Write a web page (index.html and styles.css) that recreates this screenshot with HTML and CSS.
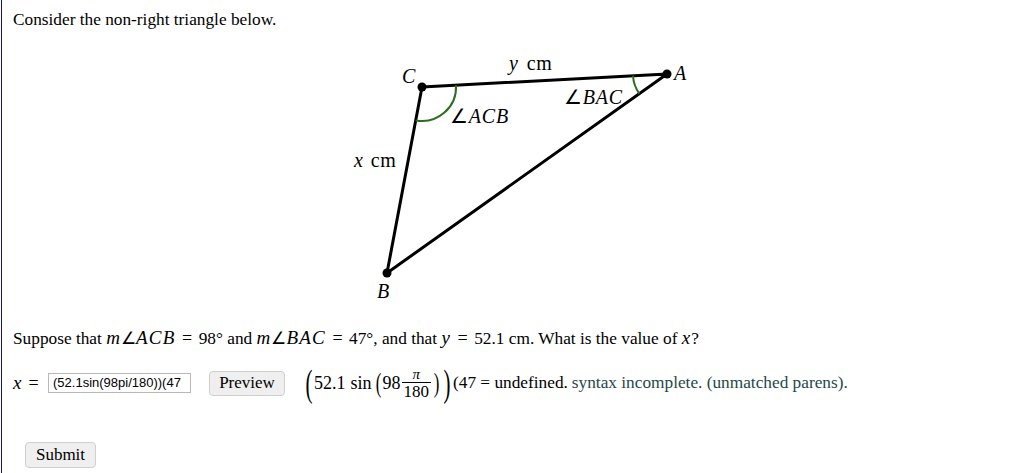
FILE: index.html
```html
<!DOCTYPE html>
<html>
<head>
<meta charset="utf-8">
<link rel="stylesheet" href="styles.css">
</head>
<body>
<div class="page">
  <p class="intro">Consider the non-right triangle below.</p>
  <svg class="figure" width="700" height="270" viewBox="12 40 700 270" xmlns="http://www.w3.org/2000/svg">
    <path d="M421 87 L666 74 L386 273 Z" fill="none" stroke="#000" stroke-width="3" stroke-linejoin="round"/>
    <path d="M455 85.2 A34 34 0 0 1 414.7 120.4" fill="none" stroke="#2b6e1e" stroke-width="2"/>
    <path d="M632 75.8 A34 34 0 0 0 638.3 93.7" fill="none" stroke="#2b6e1e" stroke-width="2"/>
    <circle cx="421" cy="87" r="4.5" fill="#000"/>
    <circle cx="666" cy="74" r="4.5" fill="#000"/>
    <circle cx="386" cy="273" r="4.5" fill="#000"/>
    <text class="lbl it" x="401" y="83">C</text>
    <text class="lbl it" x="673" y="80">A</text>
    <text class="lbl it" x="376" y="298">B</text>
    <text class="lbl" x="508" y="70"><tspan class="it">y</tspan><tspan dx="8">cm</tspan></text>
    <text class="lbl" x="353" y="167"><tspan class="it">x</tspan><tspan dx="7">cm</tspan></text>
    <text class="lbl" x="563" y="104">∠<tspan class="it">BAC</tspan></text>
    <text class="lbl" x="449" y="123">∠<tspan class="it">ACB</tspan></text>
  </svg>
  <p class="question">Suppose that <span class="m">m</span>∠<span class="m">ACB</span><span class="rel">=</span>98° and <span class="m">m</span>∠<span class="m">BAC</span><span class="rel">=</span>47°, and that <span class="m">y</span><span class="rel">=</span>52.1 cm. What is the value of <span class="m">x</span>?</p>
  <div class="answer">
    <span class="var"><span class="m">x</span><span class="rel">=</span></span>
    <span class="inputbox">(52.1sin(98pi/180))(47</span>
    <span class="btn preview">Preview</span>
    <span class="render">
      <span class="bigp">(</span><span class="num">52.1</span><span class="fn">sin</span><span class="midp">(</span><span class="num">98</span><span class="frac"><span class="fnum">π</span><span class="fden">180</span></span><span class="midp">)</span><span class="bigp">)</span><span class="tail">(47 = undefined.</span> <span class="err">syntax incomplete. (unmatched parens).</span>
    </span>
  </div>
  <div class="submitrow"><span class="btn submit">Submit</span></div>
</div>
</body>
</html>
```
FILE: styles.css
```css
html, body {
  margin: 0;
  padding: 0;
  background: #fff;
}
body {
  font-family: "Liberation Serif", "Times New Roman", serif;
  font-size: 17.3px;
  color: #000;
}
.page {
  margin-left: 1px;
  border-left: 1px solid #15156b;
  padding: 10px 0 0 11px;
  height: 463px;
}
.intro {
  margin: 0;
  line-height: 20px;
}
.figure {
  display: block;
  margin-top: 10px;
}
.lbl {
  font-family: "Liberation Serif", serif;
  font-size: 20px;
  letter-spacing: 0.8px;
  fill: #000;
}
.it {
  font-style: italic;
}
.question {
  margin: 18px 0 0 0;
  line-height: 20px;
}
.m {
  font-style: italic;
  font-size: 19px;
  letter-spacing: 1.2px;
}
.rel {
  margin: 0 6.5px;
  font-size: 18px;
}
.answer {
  margin-top: 21px;
  height: 26px;
  display: flex;
  align-items: center;
}
.var {
  display: inline-flex;
  align-items: center;
  width: 35px;
}
.var .m {
  letter-spacing: 0;
}
.var .rel {
  margin: 0 0 0 7px;
}
.inputbox {
  box-sizing: border-box;
  width: 143px;
  height: 20px;
  border: 1px solid #b8b8b8;
  font-family: "Liberation Sans", Arial, sans-serif;
  font-size: 13px;
  line-height: 18px;
  padding-left: 4px;
  margin-right: 18px;
  white-space: nowrap;
  overflow: hidden;
}
.btn {
  box-sizing: border-box;
  display: inline-flex;
  align-items: center;
  justify-content: center;
  background: #efefef;
  border: 1px solid #cfcfcf;
  border-radius: 4px;
  font-size: 17px;
}
.preview {
  width: 76px;
  height: 25px;
  margin-right: 18px;
}
.render {
  display: inline-flex;
  align-items: center;
  white-space: nowrap;
}
.bigp {
  font-size: 38px;
  line-height: 36px;
  font-weight: 300;
  transform: scaleX(0.55);
  display: inline-block;
  width: 11px;
  text-align: center;
}
.midp {
  font-size: 28px;
  line-height: 28px;
  transform: scaleX(0.6);
  display: inline-block;
  width: 9px;
  text-align: center;
}
.num {
  font-size: 18px;
}
.fn {
  font-size: 18px;
  margin-left: 5px;
  margin-right: 2px;
}
.frac {
  display: inline-flex;
  flex-direction: column;
  align-items: center;
  margin: 0 1px;
  padding-top: 1px;
}
.fnum {
  font-style: italic;
  font-size: 15px;
  line-height: 13px;
  padding: 0 2px 1px;
}
.fden {
  font-size: 17px;
  line-height: 16px;
  border-top: 1px solid #000;
  padding: 1px 2px 0;
}
.tail {
  margin-left: 1px;
  margin-right: 4px;
}
.err {
  color: #1e4a47;
}
.submitrow {
  margin-top: 46px;
  padding-left: 12px;
}
.submit {
  width: 71px;
  height: 26px;
}
```
